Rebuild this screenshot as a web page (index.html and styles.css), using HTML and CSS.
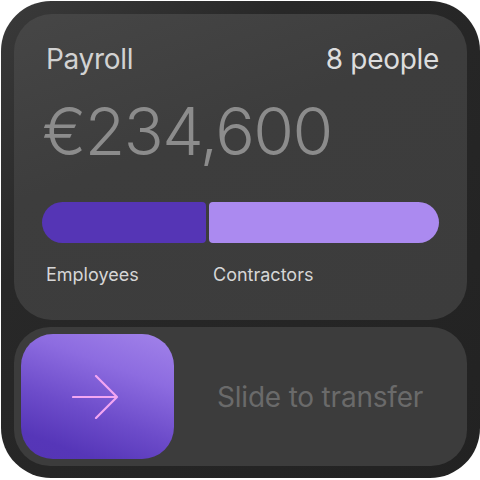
FILE: index.html
```html
<!DOCTYPE html>
<html lang="en">
<head>
    <meta charset="UTF-8">
    <meta name="viewport" content="width=device-width, initial-scale=1.0">
    <title>Payroll</title>
    <link rel="stylesheet" href="styles.css">
</head>
<body>
    <div class="shell">
        <section class="payroll-card">
            <div class="card-head">
                <span class="title">Payroll</span>
                <span class="people">8 people</span>
            </div>
            <div class="amount">€234,600</div>
            <div class="split-bar">
                <div class="split employees"></div>
                <div class="split contractors"></div>
            </div>
            <div class="split-labels">
                <span class="label employees-label">Employees</span>
                <span class="label contractors-label">Contractors</span>
            </div>
        </section>

        <section class="transfer-card">
            <div class="slider-knob">
                <svg width="48" height="44" viewBox="0 0 48 44" fill="none">
                    <path d="M1 22 H45 M24 1 L45 22 L24 43" stroke="#f3a6f2" stroke-width="2.2" stroke-linecap="round" stroke-linejoin="round"/>
                </svg>
            </div>
            <div class="slide-text">Slide to transfer</div>
        </section>
    </div>
</body>
</html>
```

FILE: styles.css
```css
/* General */
body {
    margin: 0;
    padding: 0;
    background-color: #ffffff;
    font-family: 'Inter', 'Noto Sans', sans-serif;
}

.shell {
    box-sizing: border-box;
    width: 479px;
    height: 477px;
    margin: 1px 0 0 1px;
    padding: 13px 13px 12px 13px;
    border-radius: 50px;
    background: linear-gradient(135deg, #3a3a3a 0%, #282828 30%, #222222 100%);
    display: flex;
    flex-direction: column;
    gap: 7px;
}

/* Payroll card */
.payroll-card {
    height: 306px;
    box-sizing: border-box;
    padding: 26px 28px 0 28px;
    border-radius: 38px;
    background: linear-gradient(160deg, #464646 0%, #3d3d3d 40%, #3c3c3c 100%);
}

.card-head {
    display: flex;
    justify-content: space-between;
    padding: 0 0 0 4px;
    height: 38px;
    align-items: center;
}

.title,
.people {
    font-size: 28px;
    color: #d2d2d2;
    letter-spacing: -0.3px;
}

.people {
    color: #dddddd;
}

.amount {
    margin-top: 18px;
    font-size: 66px;
    font-weight: 300;
    color: #8c8c8c;
    letter-spacing: -1.6px;
    line-height: 70px;
}

.split-bar {
    display: flex;
    gap: 3px;
    height: 41px;
    margin-top: 36px;
}

.split.employees {
    width: 164px;
    background-color: #5535b5;
    border-radius: 21px 4px 4px 21px;
}

.split.contractors {
    flex: 1;
    background-color: #ab8af0;
    border-radius: 4px 21px 21px 4px;
}

.split-labels {
    display: flex;
    margin-top: 21px;
    padding-left: 4px;
}

.label {
    font-size: 18px;
    color: #d6d6d6;
}

.employees-label {
    width: 167px;
}

/* Transfer card */
.transfer-card {
    flex: 1;
    display: flex;
    align-items: center;
    box-sizing: border-box;
    padding: 7px;
    border-radius: 36px;
    background-color: #3c3c3c;
}

.slider-knob {
    width: 153px;
    height: 125px;
    border-radius: 32px;
    background: linear-gradient(200deg, #a283ea 0%, #8d6ce0 30%, #6d4cca 60%, #5636b8 85%, #5535b5 100%);
    display: flex;
    align-items: center;
    justify-content: center;
    padding-right: 4px;
    box-sizing: border-box;
}

.slide-text {
    margin-left: 43px;
    font-size: 28px;
    color: #6a6a6a;
    letter-spacing: -0.2px;
}
```
